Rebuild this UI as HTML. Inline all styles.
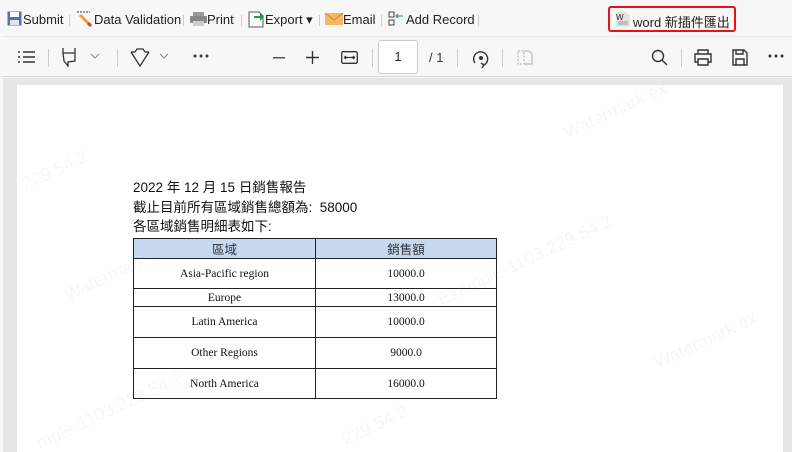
<!DOCTYPE html>
<html><head><meta charset="utf-8"><style>
*{margin:0;padding:0;box-sizing:border-box}
html,body{width:792px;height:452px;overflow:hidden}
body{background:#f7f7f7;font-family:"Liberation Sans","Noto Sans CJK TC",sans-serif;position:relative}
.tb1{position:absolute;left:3px;top:5px;right:0;height:28px;font-size:13px;color:#222}
.tb1 span{position:absolute;top:7px}
.sep{position:absolute;top:10px;width:1px;height:11px;background:#ccc}
.tb2{position:absolute;left:3px;top:36px;right:0;height:41px;border-top:1px solid #e8e8e8;border-bottom:1px solid #d8d8d8;background:#f7f7f7}
.tb2 svg{position:absolute}
.vs{position:absolute;top:12px;width:1px;height:18px;background:#ccc}
.gray{position:absolute;left:3px;top:78px;right:0;height:374px;background:#e6e6e6}
.page{position:absolute;left:17px;top:85px;width:766px;height:367px;background:#fff}
.txt{position:absolute;left:133px;font-size:13.5px;color:#111}
table{position:absolute;left:133px;top:238px;border-collapse:collapse;font-family:"Liberation Serif","Noto Serif CJK SC",serif;font-size:11.5px;color:#111}
td{border:1.5px solid #222;text-align:center;padding:0}
th{border:1.5px solid #222;background:#c6d9f1;font-weight:normal;font-family:"Liberation Sans","Noto Sans CJK TC",sans-serif;font-size:12.5px;height:19px;color:#333}
.wm{position:absolute;color:rgba(0,0,0,0.035);font-size:18px;transform:rotate(-25deg);white-space:nowrap}
</style></head><body>
<div class="tb1">
 <svg style="position:absolute;left:4px;top:6px" width="15" height="15"><rect x="0.5" y="0.5" width="14" height="14" fill="#5a6fb0"/><rect x="3" y="1" width="9" height="5" fill="#fff"/><rect x="3" y="9" width="9" height="5" fill="#dfe4f2"/></svg>
 <span style="left:20px">Submit</span><div class="sep" style="left:66px"></div>
 <svg style="position:absolute;left:73px;top:6px" width="18" height="16"><line x1="1" y1="1" x2="14" y2="1" stroke="#335" stroke-dasharray="2 1"/><line x1="4" y1="4" x2="14" y2="14" stroke="#f0a030" stroke-width="3"/><line x1="12" y1="12" x2="15" y2="15" stroke="#e04040" stroke-width="3"/></svg>
 <span style="left:91px">Data Validation</span><div class="sep" style="left:180px"></div>
 <svg style="position:absolute;left:187px;top:7px" width="17" height="14"><rect x="3" y="0" width="11" height="4" fill="#999"/><rect x="0" y="4" width="17" height="7" rx="1" fill="#888"/><rect x="3" y="9" width="11" height="5" fill="#ccc"/></svg>
 <span style="left:204px">Print</span><div class="sep" style="left:238px"></div>
 <svg style="position:absolute;left:245px;top:5px" width="17" height="18"><path d="M1 2h10l4 4v11H1z" fill="#fff" stroke="#555"/><path d="M6 6h6V3l4 4-4 4V8H6z" fill="#2a9a3a"/></svg>
 <span style="left:262px">Export ▾</span><div class="sep" style="left:316px"></div>
 <svg style="position:absolute;left:322px;top:8px" width="18" height="12"><rect width="18" height="12" fill="#f3b860"/><path d="M0 0l9 7 9-7" fill="none" stroke="#d08a30"/></svg>
 <span style="left:340px">Email</span><div class="sep" style="left:378px"></div>
 <svg style="position:absolute;left:385px;top:6px" width="16" height="16"><rect x="1" y="1" width="5" height="5" fill="none" stroke="#444"/><rect x="1" y="9" width="5" height="5" fill="none" stroke="#444"/><path d="M8 5h7M10 3l-2 2 2 2" stroke="#2a7ad0" fill="none"/></svg>
 <span style="left:403px">Add Record</span><div class="sep" style="left:475px"></div>
</div>
<div style="position:absolute;left:608px;top:6px;width:128px;height:26px;border:2px solid #e8101a;border-radius:3px"></div>
<svg style="position:absolute;left:616px;top:12px" width="14" height="15"><path d="M0 0h10l4 4v11H0z" fill="#e4e4e4"/><text x="0" y="8" font-size="8" font-family="Liberation Sans" fill="#222">W</text><path d="M2 10h10M2 12h10" stroke="#999"/></svg>
<div style="position:absolute;left:633px;top:12px;font-size:13px;color:#222">word 新插件匯出</div>

<div class="tb2">
 <svg style="left:14px;top:12px" width="20" height="16" fill="none" stroke="#333" stroke-width="1.4"><path d="M1 3h2M6 3h12M1 8h2M6 8h12M1 13h2M6 13h12"/></svg>
 <div class="vs" style="left:45px"></div>
 <svg style="left:58px;top:11px" width="16" height="19" fill="none" stroke="#333" stroke-width="1.3"><path d="M2 0v5h12V0M2 5l1 8 4 5v-4l7-1V5"/></svg>
 <svg style="left:87px;top:16px" width="10" height="7" fill="none" stroke="#888"><path d="M1 1l4 4 4-4"/></svg>
 <div class="vs" style="left:114px"></div>
 <svg style="left:127px;top:11px" width="20" height="19" fill="none" stroke="#333" stroke-width="1.3"><path d="M1 4h4l2-3h6l2 3h4M1 4l9 14 9-14"/></svg>
 <svg style="left:156px;top:16px" width="10" height="7" fill="none" stroke="#888"><path d="M1 1l4 4 4-4"/></svg>
 <svg style="left:190px;top:17px" width="16" height="4" fill="#333"><circle cx="2" cy="2" r="1.5"/><circle cx="8" cy="2" r="1.5"/><circle cx="14" cy="2" r="1.5"/></svg>
 <svg style="left:270px;top:20px" width="12" height="2"><rect width="12" height="1.5" fill="#555"/></svg>
 <svg style="left:303px;top:14px" width="13" height="13" stroke="#333" stroke-width="1.4"><path d="M6.5 0v13M0 6.5h13"/></svg>
 <svg style="left:338px;top:14px" width="17" height="13" fill="none" stroke="#333" stroke-width="1.3"><rect x="0.7" y="0.7" width="15.6" height="11.6" rx="1.5"/><path d="M4 6.5h9M5 5l-1.5 1.5L5 8M12 5l1.5 1.5L12 8"/></svg>
 <div class="vs" style="left:369px"></div>
 <div style="position:absolute;left:375px;top:3px;width:40px;height:34px;border:1px solid #ccc;border-radius:3px;background:#fff;font-size:13px;text-align:center;line-height:32px;color:#222">1</div>
 <div style="position:absolute;left:426px;top:13px;font-size:13px;color:#333">/ 1</div>
 <div class="vs" style="left:454px"></div>
 <svg style="left:468px;top:11px" width="20" height="20" fill="none" stroke="#333" stroke-width="1.4"><path d="M4 15A7 7 0 1 1 13 17"/><path d="M10 15l3 2-2 3"/><circle cx="10" cy="10" r="1.3" fill="#333"/></svg>
 <div class="vs" style="left:499px"></div>
 <svg style="left:514px;top:13px" width="16" height="15" fill="none" stroke="#bbb" stroke-width="1.2"><rect x="1" y="1" width="6" height="13" stroke-dasharray="2 1.5"/><path d="M7 1h5l3 3v10H7"/></svg>
 <svg style="left:648px;top:12px" width="17" height="17" fill="none" stroke="#333" stroke-width="1.4"><circle cx="7" cy="7" r="5.5"/><path d="M11 11l5 5"/></svg>
 <div class="vs" style="left:678px"></div>
 <svg style="left:691px;top:12px" width="18" height="17" fill="none" stroke="#333" stroke-width="1.4"><path d="M4 5V1h10v4M4 13H1V5h16v8h-3M4 10h10v6H4z"/></svg>
 <svg style="left:729px;top:12px" width="16" height="17" fill="none" stroke="#333" stroke-width="1.4"><path d="M1 1h11l3 3v12H1z M4 1v4h7V1 M4 16v-6h8v6"/></svg>
 <svg style="left:765px;top:17px" width="16" height="4" fill="#333"><circle cx="2" cy="2" r="1.5"/><circle cx="8" cy="2" r="1.5"/><circle cx="14" cy="2" r="1.5"/></svg>
</div>
<div class="gray"></div>
<div class="page"></div>
<div class="wm" style="left:20px;top:160px">229.54.2</div>
<div class="wm" style="left:560px;top:100px">Watermark ex</div>
<div class="wm" style="left:60px;top:260px">Watermark exa</div>
<div class="wm" style="left:430px;top:250px">Example-1103.229.54.2</div>
<div class="wm" style="left:650px;top:330px">Watermark ex</div>
<div class="wm" style="left:30px;top:400px">mple-1103.229.54.2</div>
<div class="wm" style="left:340px;top:415px">229.54.2</div>
<div class="txt" style="top:176px">2022 年 12 月 15 日銷售報告</div>
<div class="txt" style="top:196px">截止目前所有區域銷售總額為:&nbsp; 58000</div>
<div class="txt" style="top:215px">各區域銷售明細表如下:</div>
<table>
<tr><th style="width:182px">區域</th><th style="width:181px">銷售額</th></tr>
<tr style="height:30px"><td>Asia-Pacific region</td><td>10000.0</td></tr>
<tr style="height:18px"><td>Europe</td><td>13000.0</td></tr>
<tr style="height:31px"><td>Latin America</td><td>10000.0</td></tr>
<tr style="height:31px"><td>Other Regions</td><td>9000.0</td></tr>
<tr style="height:30px"><td>North America</td><td>16000.0</td></tr>
</table>
</body></html>
